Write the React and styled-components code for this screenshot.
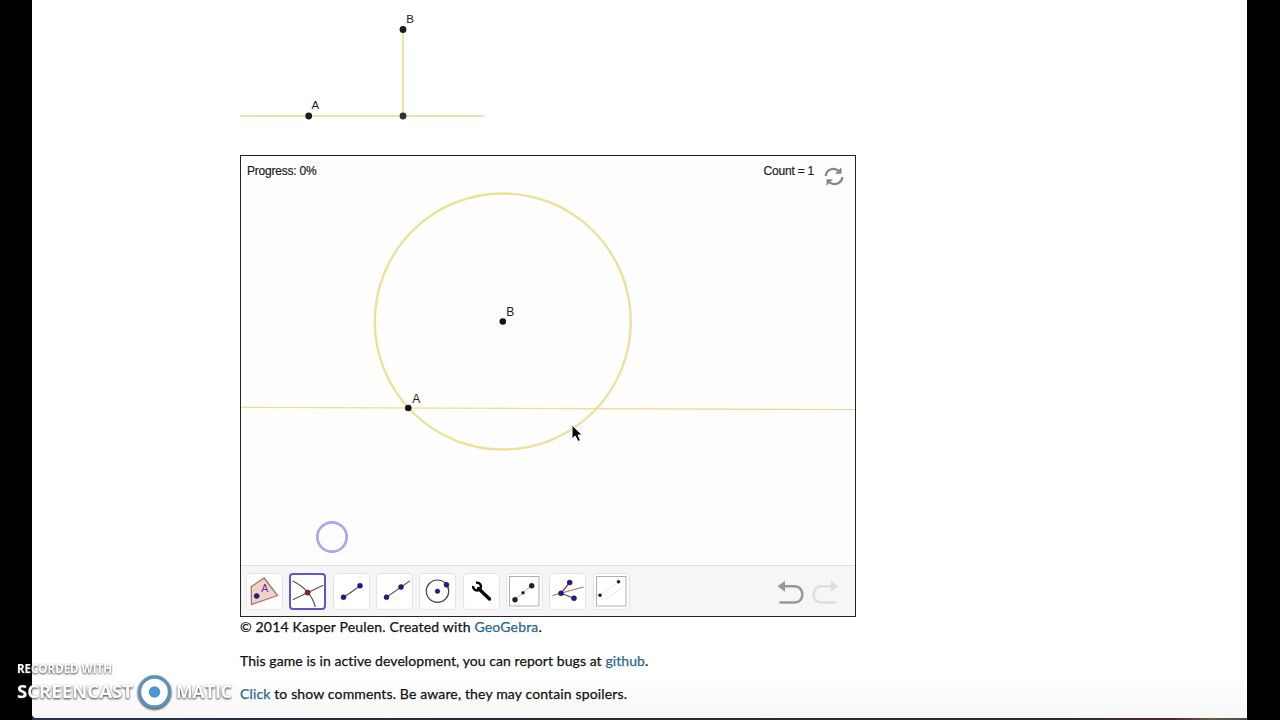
import React from "react";
import styled, { createGlobalStyle } from "styled-components";

const GlobalStyle = createGlobalStyle`
  body {
    margin: 0;
    background: #000;
    overflow: hidden;
  }
  * {
    box-sizing: border-box;
  }
`;

const Screen = styled.div`
  position: relative;
  width: 1280px;
  height: 720px;
  padding: 0 33px 0 32px;
  background: #000;
`;

const Page = styled.main`
  display: flex;
  flex-direction: column;
  height: 718px;
  padding-left: 208px;
  border-bottom-left-radius: 4px;
  background: linear-gradient(#fff 0, #fff 675px, #f7f7f7 718px);
`;

const DesktopEdge = styled.div`
  height: 2px;
  background: linear-gradient(90deg, #26364d 0%, #222b38 35%, #302c36 85%, #4d2638 94%, #6b5b48 97%, #4b4e40 100%);
`;

const Goal = styled.svg`
  display: block;
  width: 250px;
  height: 155px;
`;

const Board = styled.section`
  display: flex;
  flex-direction: column;
  width: 616px;
  height: 462px;
  border: 1px solid #222;
  background: #fefefe;
`;

const StatusBar = styled.div`
  display: flex;
  justify-content: space-between;
  height: 40px;
  padding: 8px 10px 0 6px;
  font: 12px/14px "Liberation Sans", Arial, sans-serif;
  letter-spacing: -0.22px;
  color: #1c1c1c;
  -webkit-text-stroke: 0.2px #1c1c1c;
`;

const Counter = styled.div`
  display: flex;
  gap: 9px;

  svg {
    margin-top: 2px;
  }
`;

const Drawing = styled.svg`
  display: block;
  width: 614px;
  height: 369px;
`;

const Toolbar = styled.div`
  display: flex;
  align-items: center;
  gap: 6.35px;
  height: 51px;
  padding: 1px 16px 0 5px;
  border-top: 1px solid #dedede;
  background: #f6f6f6;
`;

const ToolButton = styled.button`
  flex: none;
  width: 37px;
  height: 37px;
  padding: 0;
  border: ${(props) => (props.$active ? "2px solid #6b50cc" : "1px solid #e4e4e4")};
  border-radius: 4px;
  background: #fff;

  svg {
    display: block;
    width: 37px;
    height: 37px;
    margin: ${(props) => (props.$active ? "-2px" : "-1px")};
  }
`;

const History = styled.div`
  display: flex;
  gap: 8px;
  margin-left: auto;
  padding-top: 3px;
`;

const Note = styled.p`
  margin: 0;
  height: 33.7px;
  font: 14px/19px Lato, "Gill Sans", sans-serif;
  letter-spacing: ${(props) => props.$spacing};
  white-space: nowrap;
  color: #111;
  -webkit-text-stroke: 0.25px;

  a {
    color: #28688f;
  }
`;

const Watermark = styled.svg`
  position: absolute;
  left: 0;
  top: 650px;
  filter: drop-shadow(0.8px 1.2px 0.8px #333);
`;

const Cursor = styled.svg`
  position: absolute;
  left: 570px;
  top: 423px;
`;

const Dot = ({ x, y, r = 2.5, fill = "#22198a" }) => (
  <circle cx={x} cy={y} r={r} fill={fill} stroke="#16134a" strokeWidth="0.5" />
);

const Label = ({ x, y, children, size = 12 }) => (
  <text x={x} y={y} fontSize={size} fontFamily="Liberation Sans, Arial, sans-serif" fill="#222">
    {children}
  </text>
);

const tools = [
  {
    name: "Move",
    icon: (
      <>
        <path d="M5.2 13.7 18.2 5 31.5 22.5 5.5 31.5Z" fill="#f0d2c8" stroke="#a77569" strokeWidth="1.3" />
        <text x="15.3" y="18.5" fontSize="10.5" fontFamily="Liberation Sans, sans-serif" fill="#5430bd">A</text>
        <Dot x="10.7" y="23" />
      </>
    ),
  },
  {
    name: "Intersect",
    icon: (
      <>
        <path d="M3.7 8Q22 17 26.3 34M3.7 26.8 34.3 12.3" fill="none" stroke="#555" strokeWidth="1.2" />
        <circle cx="18.6" cy="19.6" r="2.5" fill="#8d211b" stroke="#4b1511" strokeWidth="0.7" />
      </>
    ),
  },
  {
    name: "Segment",
    icon: (
      <>
        <path d="M10.5 24.5 27 13" stroke="#555" strokeWidth="1.2" />
        <Dot x="10.5" y="24.2" />
        <Dot x="27" y="12.7" />
      </>
    ),
  },
  {
    name: "Ray",
    icon: (
      <>
        <path d="M10.5 24.2 34 7.7" stroke="#666" strokeWidth="1.2" />
        <Dot x="10.5" y="24.2" />
        <Dot x="25" y="14" />
      </>
    ),
  },
  {
    name: "Circle",
    icon: (
      <>
        <circle cx="18.5" cy="18.2" r="11.2" fill="none" stroke="#444" strokeWidth="1.2" />
        <Dot x="18.5" y="18.2" r={2.3} />
        <Dot x="27.5" y="11.8" />
      </>
    ),
  },
  {
    name: "Custom tools",
    icon: (
      <>
        <path d="M15.5 15.5 26.5 26" fill="none" stroke="#080808" strokeWidth="3.4" strokeLinecap="round" />
        <path d="M13 9.8A3.9 3.9 0 1 1 10.2 13" fill="none" stroke="#080808" strokeWidth="2.5" />
      </>
    ),
  },
  {
    name: "Midpoint",
    icon: (
      <>
        <rect x="3.5" y="3.5" width="29.5" height="29.5" fill="#fff" stroke="#b0b0b0" />
        <path d="M9 26.7 25.5 12.7" stroke="#b8b596" strokeWidth="1" />
        <Dot x="9" y="26.7" fill="#222" />
        <Dot x="17" y="19.8" r={1.4} fill="#111" />
        <Dot x="25.7" y="12.8" fill="#222" />
      </>
    ),
  },
  {
    name: "Angle bisector",
    icon: (
      <>
        <path d="M20.7 9.5 12 20.3 25 25.3" fill="none" stroke="#52564d" strokeWidth="1.2" />
        <path d="M3.5 22.5 34.5 14" stroke="#bd6970" strokeWidth="1.2" />
        <Dot x="12" y="20.3" />
        <Dot x="20.7" y="9.5" />
        <Dot x="25" y="25.2" />
      </>
    ),
  },
  {
    name: "Perpendicular bisector",
    icon: (
      <>
        <rect x="3.5" y="3.5" width="29.5" height="29.5" fill="#fff" stroke="#b0b0b0" />
        <path d="M7 22.2 25.5 8.7M14 26 31 13" stroke="#eeebdc" strokeWidth="1" />
        <Dot x="7" y="22.2" r={1.5} fill="#111" />
        <Dot x="25.5" y="8.7" r={1.5} fill="#111" />
      </>
    ),
  },
];

const UndoIcon = ({ color, flip }) => (
  <svg width="27" height="26" viewBox="0 0 27 26">
    <g transform={flip ? "translate(27 0) scale(-1 1)" : undefined}>
      <path d="M7 6.2H17.5C28 6.5 28 22.5 17.5 22.5H2.5" fill="none" stroke={color} strokeWidth="2.6" />
      <path d="M0.5 6.2 8 0.7V11.7Z" fill={color} />
    </g>
  </svg>
);

const ReloadIcon = () => (
  <svg width="22" height="22" viewBox="0 0 22 22">
    <g fill="none" stroke="#858585" strokeWidth="2.2">
      <path d="M2.6 10C3.5 3 10.5 1.2 15.5 4.7" />
      <path d="M19.4 11C18.5 18 11.5 19.8 6.5 16.3" />
    </g>
    <path d="M18.5 1.3V7.8H12ZM3.5 19.7V13.2H10Z" fill="#858585" />
  </svg>
);

export default function App() {
  return (
    <Screen>
      <GlobalStyle />
      <Page>
        <Goal viewBox="0 0 250 155">
          <path d="M0 116H244M163 29V116" stroke="#f4dfa5" strokeWidth="2" />
          <path d="M70 116H162" stroke="#eee9a5" strokeWidth="1.5" />
          <circle cx="68.7" cy="116" r="3.4" fill="#1c1c1c" />
          <circle cx="163" cy="116" r="3.4" fill="#333" />
          <circle cx="163" cy="29.5" r="3.4" fill="#1c1c1c" />
          <Label x="71.5" y="109.5" size={11.5}>A</Label>
          <Label x="166.3" y="23" size={11.5}>B</Label>
        </Goal>
        <Board>
          <StatusBar>
            <span>Progress: 0%</span>
            <Counter>
              <span>Count = 1</span>
              <ReloadIcon />
            </Counter>
          </StatusBar>
          <Drawing viewBox="241 196 614 369" overflow="visible">
            <defs>
              <linearGradient id="gold" x1="0" y1="0" x2="1" y2="1">
                <stop offset="0" stopColor="#e7e492" />
                <stop offset="1" stopColor="#f3dda0" />
              </linearGradient>
            </defs>
            <circle cx="502.8" cy="321.5" r="128" fill="none" stroke="url(#gold)" strokeWidth="2.4" />
            <path d="M241 407.4 855 409.6" stroke="#f2dc90" strokeWidth="1.3" />
            <circle cx="502.8" cy="321.5" r="3.3" fill="#151515" />
            <circle cx="408.3" cy="408" r="3.3" fill="#151515" />
            <Label x="506.3" y="316">B</Label>
            <Label x="412.3" y="402.5">A</Label>
            <circle cx="332" cy="537" r="14.7" fill="none" stroke="#aca4f0" strokeWidth="2.7" />
          </Drawing>
          <Toolbar>
            {tools.map((tool) => (
              <ToolButton key={tool.name} aria-label={tool.name} $active={tool.name === "Intersect"}>
                <svg viewBox="0 0 37 37">{tool.icon}</svg>
              </ToolButton>
            ))}
            <History>
              <UndoIcon color="#999" />
              <UndoIcon color="#dedede" flip />
            </History>
          </Toolbar>
        </Board>
        <Note $spacing="0.17px">
          © 2014 Kasper Peulen. Created with <a>GeoGebra</a>.
        </Note>
        <Note $spacing="0.07px">
          This game is in active development, you can report bugs at <a>github</a>.
        </Note>
        <Note $spacing="0.14px">
          <a>Click</a> to show comments. Be aware, they may contain spoilers.
        </Note>
      </Page>
      <DesktopEdge />
      <Cursor width="16" height="21" viewBox="0 0 16 21">
        <path d="M2 2V16L5.2 13 8 18.5 10.5 17.3 8 12H12.3Z" fill="#080808" stroke="#fff" strokeWidth="1" />
      </Cursor>
      <Watermark width="240" height="70" viewBox="0 0 240 70" fontFamily="Open Sans, sans-serif" fontWeight="700" fill="#fff">
        <text x="17" y="22.7" fontSize="12" textLength="95" lengthAdjust="spacingAndGlyphs">RECORDED WITH</text>
        <text x="17" y="48.3" fontSize="18.5" textLength="116" lengthAdjust="spacingAndGlyphs">SCREENCAST</text>
        <text x="176" y="48.3" fontSize="18.5" textLength="56" lengthAdjust="spacingAndGlyphs">MATIC</text>
        <circle cx="154.5" cy="42" r="15" fill="#fff" stroke="#5b93b8" strokeWidth="3.4" />
        <circle cx="154.5" cy="42" r="5.8" fill="#4c97d3" />
      </Watermark>
    </Screen>
  );
}
